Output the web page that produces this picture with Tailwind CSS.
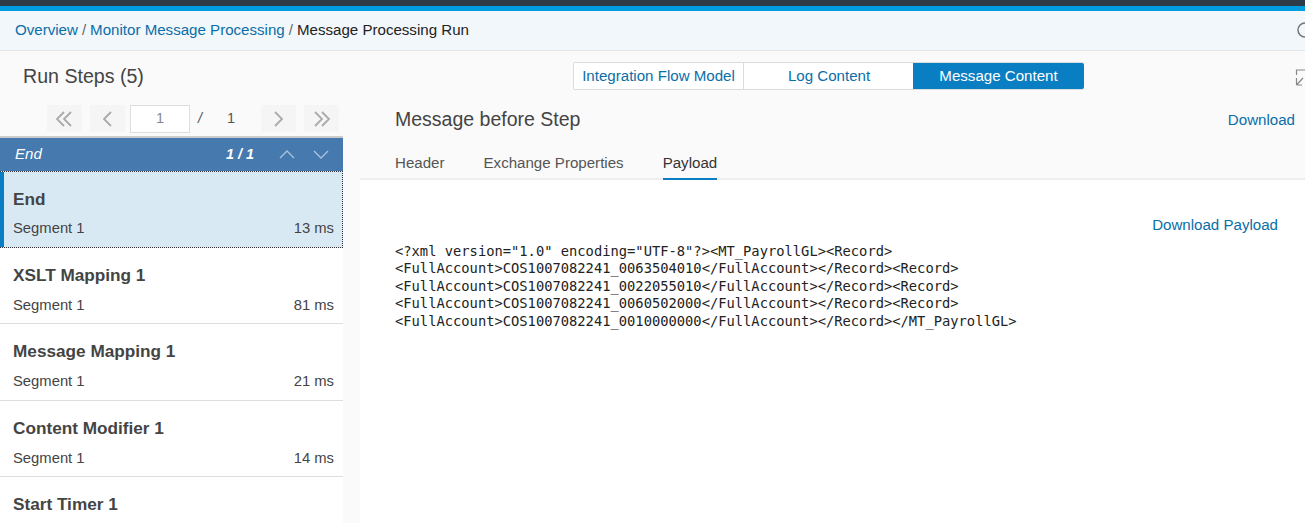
<!DOCTYPE html>
<html>
<head>
<meta charset="utf-8">
<script src="https://cdn.jsdelivr.net/npm/@tailwindcss/browser@4"></script>
</head>
<body class="w-[1305px] h-[523px] overflow-hidden bg-white font-['Liberation_Sans',sans-serif] text-[#333]">
  <div class="h-[6px] bg-[#2f3c48]"></div>
  <div class="h-[5px] bg-[#009de0]"></div>

  <!-- breadcrumb -->
  <div class="h-[40px] bg-[#f2f7fb] border-b border-[#e5e5e5] flex items-center pl-[15px] pb-[1px] text-[15.1px] relative">
    <a class="text-[#0a6ea8]">Overview</a>
    <span class="text-[#666] mx-[4px]">/</span>
    <a class="text-[#0a6ea8]">Monitor Message Processing</a>
    <span class="text-[#666] mx-[4px]">/</span>
    <span class="text-[#222]">Message Processing Run</span>
    <svg class="absolute left-[1296px] top-[11px]" width="14" height="16" viewBox="0 0 14 16" fill="none" stroke="#777" stroke-width="1.5"><circle cx="9" cy="8" r="7"/></svg>
  </div>

  <!-- title row -->
  <div class="h-[50px] bg-[#fafafa] flex items-center relative">
    <h1 class="pl-[23px] pt-[1px] text-[19.6px] text-[#444] w-[573px]">Run Steps (5)</h1>
    <div class="flex h-[28px] border border-[#dcdcdc] rounded-[2px] text-[15.1px] text-[#0a6ea8] bg-white">
      <div class="w-[170px] flex items-center justify-center border-r border-[#dcdcdc]">Integration Flow Model</div>
      <div class="w-[170px] flex items-center justify-center">Log Content</div>
      <div class="w-[171px] -ml-px -mr-px flex items-center justify-center bg-[#0a7ec2] text-white rounded-r-[2px]">Message Content</div>
    </div>
    <svg class="absolute left-[1295px] top-[18px]" width="10" height="17" viewBox="0 0 10 17" fill="none" stroke="#888" stroke-width="1.2"><path d="M10 1H1.5V6M1.5 16V9M1.5 16H7M1.5 16L8 9"/></svg>
  </div>

  <div class="flex h-[422px] bg-[#fafafa]">
    <!-- run steps list -->
    <div class="w-[343px] shrink-0">
      <div class="h-[35px] flex items-center">
        <div class="ml-[47px] w-[35px] h-[27px] bg-[#f5f5f5] flex items-center justify-center">
          <svg width="19" height="16" viewBox="0 0 19 16" fill="none" stroke="#aaa" stroke-width="1.8"><path d="M9 1L2 8L9 15M16 1L9 8L16 15"/></svg>
        </div>
        <div class="ml-[8px] w-[35px] h-[27px] bg-[#f5f5f5] flex items-center justify-center">
          <svg width="11" height="16" viewBox="0 0 11 16" fill="none" stroke="#aaa" stroke-width="1.8"><path d="M9 1L2 8L9 15"/></svg>
        </div>
        <div class="ml-[5px] w-[60px] h-[28px] bg-white border border-[#ddd] text-[14.5px] text-[#888] flex items-center justify-center">1</div>
        <span class="ml-[8px] text-[14.5px] text-[#555] italic">/</span>
        <span class="ml-[25px] text-[14.5px] text-[#555]">1</span>
        <div class="ml-[26px] w-[35px] h-[27px] bg-[#f5f5f5] flex items-center justify-center">
          <svg width="11" height="16" viewBox="0 0 11 16" fill="none" stroke="#aaa" stroke-width="1.8"><path d="M2 1L9 8L2 15"/></svg>
        </div>
        <div class="ml-[8px] w-[35px] h-[27px] bg-[#f5f5f5] flex items-center justify-center">
          <svg width="19" height="16" viewBox="0 0 19 16" fill="none" stroke="#aaa" stroke-width="1.8"><path d="M3 1L10 8L3 15M10 1L17 8L10 15"/></svg>
        </div>
      </div>

      <div class="h-[35px] bg-[#4679ae] border-t-2 border-[#ccc] flex items-center text-white italic text-[15.1px]">
        <span class="ml-[15px] w-[211px]">End</span>
        <span class="font-bold w-[53px] text-[14.4px]">1 / 1</span>
        <svg width="16" height="9" viewBox="0 0 16 9" fill="none" stroke="#a9c3de" stroke-width="1.3"><path d="M1 8L8 1L15 8"/></svg>
        <svg class="ml-[18px]" width="16" height="9" viewBox="0 0 16 9" fill="none" stroke="#a9c3de" stroke-width="1.3"><path d="M1 1L8 8L15 1"/></svg>
      </div>

      <div class="h-[77px] bg-[#d9e9f4] border border-dotted border-[#333] border-l-0 flex">
        <div class="w-[4px] bg-[#0a7ec2] shrink-0"></div>
        <div class="flex-1 pl-[9px] pr-[8px]">
          <div class="mt-[17px] font-bold text-[17.2px] leading-[20px] text-[#444]">End</div>
          <div class="mt-[9px] flex justify-between text-[14.8px] leading-[20px] text-[#444]"><span>Segment 1</span><span>13 ms</span></div>
        </div>
      </div>

      <div class="h-[76px] bg-white border-b border-[#ddd] pl-[13px] pr-[9px]">
        <div class="pt-[17px] font-bold text-[17.2px] leading-[20px] text-[#444]">XSLT Mapping 1</div>
        <div class="mt-[10px] flex justify-between text-[14.8px] leading-[20px] text-[#444]"><span>Segment 1</span><span>81 ms</span></div>
      </div>
      <div class="h-[77px] bg-white border-b border-[#ddd] pl-[13px] pr-[9px]">
        <div class="pt-[17px] font-bold text-[17.2px] leading-[20px] text-[#444]">Message Mapping 1</div>
        <div class="mt-[10px] flex justify-between text-[14.8px] leading-[20px] text-[#444]"><span>Segment 1</span><span>21 ms</span></div>
      </div>
      <div class="h-[76px] bg-white border-b border-[#ddd] pl-[13px] pr-[9px]">
        <div class="pt-[17px] font-bold text-[17.2px] leading-[20px] text-[#444]">Content Modifier 1</div>
        <div class="mt-[10px] flex justify-between text-[14.8px] leading-[20px] text-[#444]"><span>Segment 1</span><span>14 ms</span></div>
      </div>
      <div class="h-[60px] bg-white pl-[13px] pr-[9px]">
        <div class="pt-[17px] font-bold text-[17.2px] leading-[20px] text-[#444]">Start Timer 1</div>
      </div>
    </div>

    <!-- message panel -->
    <div class="ml-[17px] flex-1 min-w-0">
      <div class="h-[34px] flex items-center justify-between pl-[35px] pr-[10px] pt-[4px]">
        <h2 class="text-[19.5px] text-[#444]">Message before Step</h2>
        <a class="text-[15.1px] text-[#0a6ea8]">Download</a>
      </div>
      <div class="h-[44px] flex items-end border-b-2 border-[#eee] pl-[35px] text-[15.1px] text-[#555] mt-[1px]">
        <div class="h-[36px] -mb-[2px] pt-[8px]">Header</div>
        <div class="h-[36px] -mb-[2px] pt-[8px] ml-[39px]">Exchange Properties</div>
        <div class="h-[36px] -mb-[2px] pt-[8px] ml-[39px] text-[#333] border-b-2 border-[#0a7ec2]">Payload</div>
      </div>
      <div class="bg-white h-[343px] pl-[35px] pr-[27px] pt-[36px]">
        <div class="text-right text-[15.1px] leading-[18px] text-[#0a6ea8]">Download Payload</div>
        <pre class="mt-[9px] font-['DejaVu_Sans_Mono',monospace] text-[13.77px] leading-[17.4px] text-[#222]">&lt;?xml version="1.0" encoding="UTF-8"?&gt;&lt;MT_PayrollGL&gt;&lt;Record&gt;
&lt;FullAccount&gt;COS1007082241_0063504010&lt;/FullAccount&gt;&lt;/Record&gt;&lt;Record&gt;
&lt;FullAccount&gt;COS1007082241_0022055010&lt;/FullAccount&gt;&lt;/Record&gt;&lt;Record&gt;
&lt;FullAccount&gt;COS1007082241_0060502000&lt;/FullAccount&gt;&lt;/Record&gt;&lt;Record&gt;
&lt;FullAccount&gt;COS1007082241_0010000000&lt;/FullAccount&gt;&lt;/Record&gt;&lt;/MT_PayrollGL&gt;</pre>
      </div>
    </div>
  </div>
</body>
</html>
